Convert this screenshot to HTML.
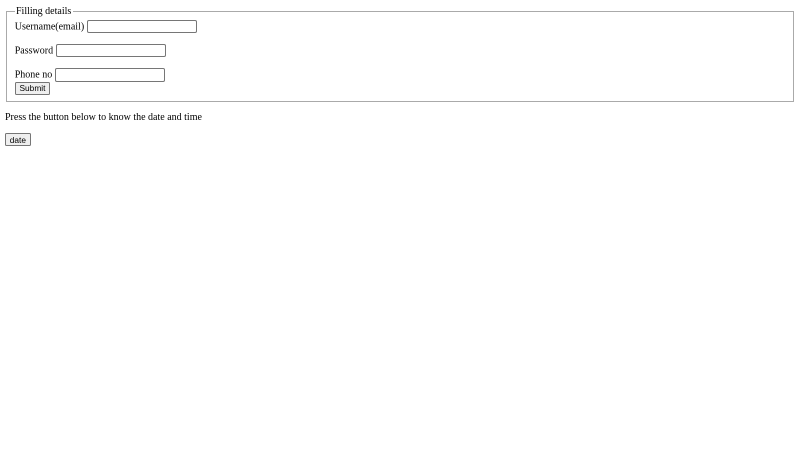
<!DOCTYPE html>
<html><head><meta charset="utf-8"><style>
html{zoom:0.625}
body{margin:9px 8px 8px 8px;font-family:"Liberation Serif",serif;font-size:16px;background:#fff;color:#000}
input{font-family:"Liberation Sans",sans-serif;box-sizing:border-box;width:177px;height:21px;border:1.6px solid #767676;border-radius:3px}
button{font-family:"Liberation Sans",sans-serif;font-size:13.33px}
fieldset{border:2px solid #aaa}
</style></head><body>
<form>
<fieldset>
<legend>Filling details</legend>
<label>Username(email)</label> <input type="text"><br><br>
<label>Password</label> <input type="password"><br><br>
<label>Phone no</label> <input type="text"><br>
<button type="button">Submit</button>
</fieldset>
</form>
<p>Press the button below to know the date and time</p>
<button type="button">date</button>
</body></html>
